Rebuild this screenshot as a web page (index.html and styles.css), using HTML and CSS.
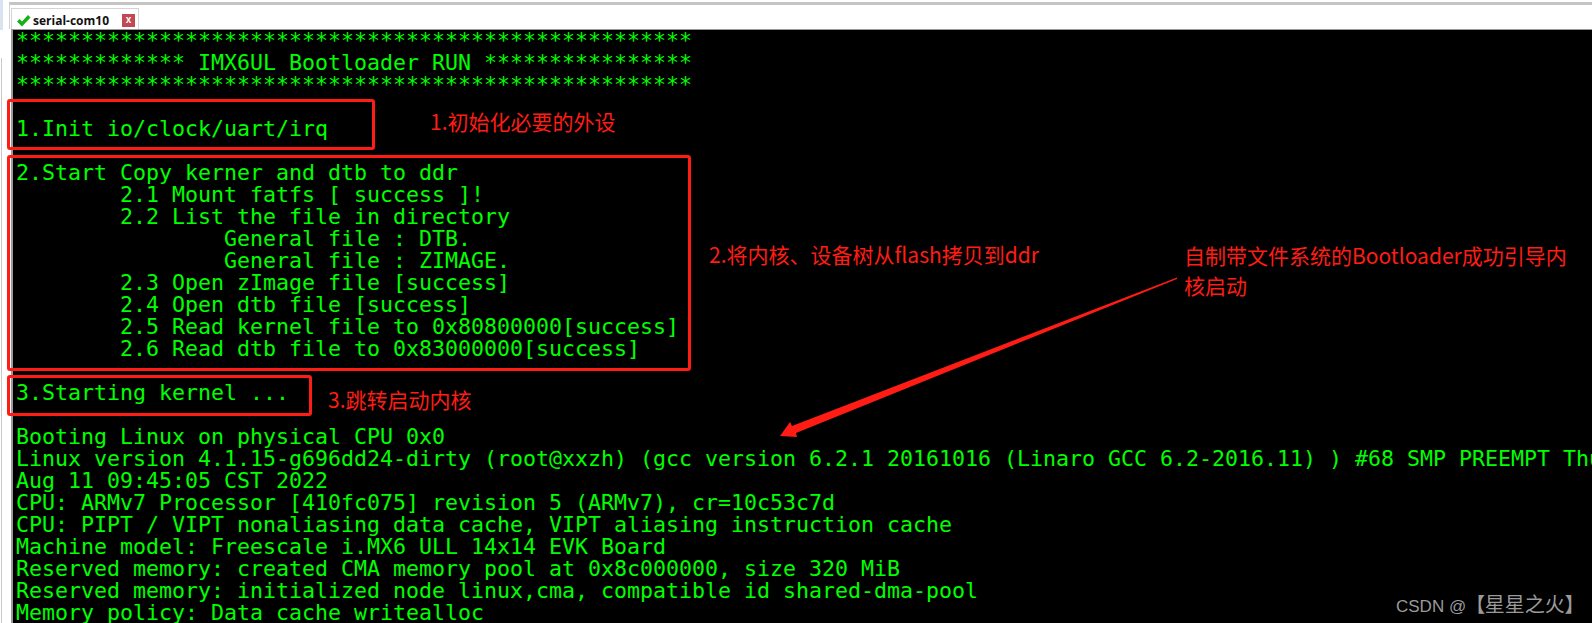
FILE: index.html
```html
<!DOCTYPE html>
<html lang="zh-CN">
<head>
<meta charset="utf-8">
<title>serial-com10</title>
<link rel="stylesheet" href="styles.css">
</head>
<body>
<div class="app">
  <aside class="side"><div class="side-top"></div><div class="side-rest"></div></aside>
  <main class="pane">
    <div class="tabbar">
      <div class="tab">
        <svg class="check" width="15" height="14" viewBox="0 0 15 14"><path d="M1 7.500 L3.600 5 L6 7.600 L12 1 L14.500 3.400 L6 12.600 Z" fill="#12b312"/></svg>
        <span class="tab-name">serial-com10</span>
        <span class="tab-close">x</span>
      </div>
    </div>
    <pre class="term">****************************************************
************* IMX6UL Bootloader RUN ****************
****************************************************

1.Init io/clock/uart/irq

2.Start Copy kerner and dtb to ddr
        2.1 Mount fatfs [ success ]!
        2.2 List the file in directory
                General file : DTB.
                General file : ZIMAGE.
        2.3 Open zImage file [success]
        2.4 Open dtb file [success]
        2.5 Read kernel file to 0x80800000[success]
        2.6 Read dtb file to 0x83000000[success]

3.Starting kernel ...

Booting Linux on physical CPU 0x0
Linux version 4.1.15-g696dd24-dirty (root@xxzh) (gcc version 6.2.1 20161016 (Linaro GCC 6.2-2016.11) ) #68 SMP PREEMPT Thu
Aug 11 09:45:05 CST 2022
CPU: ARMv7 Processor [410fc075] revision 5 (ARMv7), cr=10c53c7d
CPU: PIPT / VIPT nonaliasing data cache, VIPT aliasing instruction cache
Machine model: Freescale i.MX6 ULL 14x14 EVK Board
Reserved memory: created CMA memory pool at 0x8c000000, size 320 MiB
Reserved memory: initialized node linux,cma, compatible id shared-dma-pool
Memory policy: Data cache writealloc</pre>
  </main>
</div>
<div class="box box-1"></div>
<div class="box box-2"></div>
<div class="box box-3"></div>
<div class="note note-1">1.初始化必要的外设</div>
<div class="note note-2">2.将内核、设备树从flash拷贝到ddr</div>
<div class="note note-3">3.跳转启动内核</div>
<div class="note note-4">自制带文件系统的Bootloader成功引导内<br>核启动</div>
<svg class="arrow" width="440" height="180" viewBox="0 0 440 180"><path d="M417 7.500 L32 156 L30 152 L20 166 L37 167 L36 163 L417 9 Z" fill="#ff1c14"/></svg>
<div class="mark">CSDN @ <span class="mark-name">【星星之火】</span></div>
</body>
</html>
```
FILE: styles.css
```css
html, body { margin: 0; padding: 0; background: #fff; }
body { width: 1592px; height: 623px; overflow: hidden; position: relative; }
.app { display: flex; height: 623px; }
.side { width: 9px; display: flex; flex-direction: column; flex: none; }
.side-top { height: 30px; width: 3px; background: #d8e4f0; }
.side-rest { flex: 1; margin-top: 28px; width: 2px; border-right: 1px solid #c8c8c8; box-sizing: border-box; }
.pane { flex: 1; min-width: 0; display: flex; flex-direction: column; }
.tabbar { box-sizing: border-box; padding: 3px 0 0 1px; background: #fff; border-top: 3px solid #c4c4c4; border-left: 1px solid #d4d4d4; margin-top: 2px; flex: none; height: 27px; }
.tab { display: flex; align-items: center; width: 128px; height: 24px; box-sizing: border-box; border: 1px solid #d4d4d4; border-bottom: 0; padding: 0 3px 0 4px; }
.check { flex: none; margin-right: 2px; }
.tab-name { font: bold 12px "Open Sans", "Liberation Sans", sans-serif; color: #111; white-space: nowrap; }
.tab-close { margin-left: auto; width: 13px; height: 13px; background: #c04a50; color: #fff; font: bold 10px/12px "Liberation Sans", sans-serif; text-align: center; }
.term { flex: 1; margin: 0 0 0 2px; padding: 0 0 0 3px; background: #000; color: #00ff00; border-left: 2px solid #9a9a9a; border-top: 1px solid #9a9a9a; box-sizing: border-box; font: 21.6px/22px "DejaVu Sans Mono", monospace; overflow: hidden; white-space: pre; }
.box { position: absolute; border: 3px solid #ff1c14; border-radius: 3px; box-sizing: border-box; }
.box-1 { left: 7px; top: 99px; width: 368px; height: 51px; }
.box-2 { left: 7px; top: 155px; width: 684px; height: 216px; }
.box-3 { left: 7px; top: 375px; width: 305px; height: 41px; }
.note { position: absolute; color: #ff1c14; font: 21px/30px "Noto Sans CJK SC", sans-serif; white-space: nowrap; }
.note-1 { left: 430px; top: 106px; }
.note-2 { left: 709px; top: 239px; }
.note-3 { left: 328px; top: 384px; }
.note-4 { left: 1184px; top: 241px; line-height: 29.500px; }
.arrow { position: absolute; left: 760px; top: 270px; }
.mark { position: absolute; left: 1396px; top: 592px; color: #9a9a9a; font: 17px/24px "Liberation Sans", "Noto Sans CJK SC", sans-serif; white-space: nowrap; }
.mark-name { margin-left: 4px; font: 20px/24px "Noto Sans CJK SC", sans-serif; font-feature-settings: "palt"; }
```
